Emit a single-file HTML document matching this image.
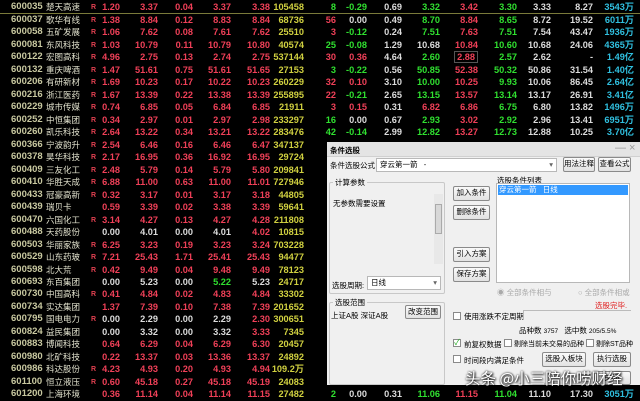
<!DOCTYPE html>
<html><head><meta charset="utf-8"><style>
*{margin:0;padding:0;box-sizing:border-box}
body{width:640px;height:401px;background:#000;overflow:hidden;position:relative;font-family:"Liberation Sans","Noto Sans CJK SC",sans-serif}
.r{position:absolute;left:0;width:640px;height:12px;font-size:9.2px;font-weight:bold;line-height:12px;white-space:nowrap}
.r span{position:absolute;text-align:right}
.r .cd{left:11px;color:#c8c8a0;text-align:left;font-size:9.5px}
.r .nm{left:46px;color:#e0e0cc;font-size:8.5px;font-weight:normal;text-align:left}
.r .R{left:91px;color:#e04050;font-size:7px;top:1px}
.c4{right:520px}.c5{right:482px}.c6{right:447px}.c7{right:409px}.c8{right:370px}.c9{right:336px;color:#d0d040}
.c10{right:304px}.c11{right:273px}.c12{right:238px}.c13{right:200px}.c14{right:162px}.c15{right:123px}.c16{right:89px}.c17{right:47px}.c18{right:6px;color:#30c0e0}
.e{color:#f04058}.g{color:#30e030}.w{color:#dcdcdc}
.dlg{position:absolute;left:327px;top:142px;width:313px;height:243px;background:#f0f0f0;font-size:7.5px;color:#000;font-family:"Liberation Sans","Noto Sans CJK SC",sans-serif}
.dlg div{position:absolute;white-space:nowrap}
.btn{border:1px solid #8a8a8a;background:linear-gradient(#fafafa,#e2e2e2);text-align:center;line-height:12px;border-radius:2px}
.box{border:1px solid #b8b8b8;background:#fff}
.grp{border:1px solid #c8c8c8;border-radius:2px}
.cb{width:8px;height:8px;border:1px solid #8a8a8a;background:#fff}
</style></head><body>
<div style="position:absolute;left:0;top:13px;width:640px;height:1px;background:#7a7a3a"></div>

<div class="r" style="top:1px"><span class="cd">600035</span><span class="nm">楚天高速</span><span class="R">R</span><span class="c4 e">1.20</span><span class="c5 e">3.37</span><span class="c6 e">0.04</span><span class="c7 e">3.37</span><span class="c8 e">3.38</span><span class="c9">105458</span><span class="c10 g">8</span><span class="c11 g">-0.29</span><span class="c12 w">0.69</span><span class="c13 g">3.32</span><span class="c14 e">3.42</span><span class="c15 g">3.30</span><span class="c16 w">3.33</span><span class="c17 w">8.27</span><span class="c18">3543万</span></div>
<div class="r" style="top:14px"><span class="cd">600037</span><span class="nm">歌华有线</span><span class="R">R</span><span class="c4 e">1.38</span><span class="c5 e">8.84</span><span class="c6 e">0.12</span><span class="c7 e">8.83</span><span class="c8 e">8.84</span><span class="c9">68736</span><span class="c10 e">56</span><span class="c11 w">0.00</span><span class="c12 w">0.49</span><span class="c13 g">8.70</span><span class="c14 e">8.84</span><span class="c15 g">8.65</span><span class="c16 w">8.72</span><span class="c17 w">19.52</span><span class="c18">6011万</span></div>
<div class="r" style="top:26px"><span class="cd">600058</span><span class="nm">五矿发展</span><span class="R">R</span><span class="c4 e">1.06</span><span class="c5 e">7.62</span><span class="c6 e">0.08</span><span class="c7 e">7.61</span><span class="c8 e">7.62</span><span class="c9">25510</span><span class="c10 e">3</span><span class="c11 g">-0.12</span><span class="c12 w">0.24</span><span class="c13 g">7.51</span><span class="c14 e">7.63</span><span class="c15 g">7.51</span><span class="c16 w">7.54</span><span class="c17 w">43.47</span><span class="c18">1936万</span></div>
<div class="r" style="top:39px"><span class="cd">600081</span><span class="nm">东风科技</span><span class="R">R</span><span class="c4 e">1.03</span><span class="c5 e">10.79</span><span class="c6 e">0.11</span><span class="c7 e">10.79</span><span class="c8 e">10.80</span><span class="c9">40574</span><span class="c10 g">25</span><span class="c11 g">-0.08</span><span class="c12 w">1.29</span><span class="c13 w">10.68</span><span class="c14 e">10.84</span><span class="c15 g">10.60</span><span class="c16 w">10.68</span><span class="c17 w">24.06</span><span class="c18">4365万</span></div>
<div class="r" style="top:51px"><span class="cd">600122</span><span class="nm">宏图高科</span><span class="R">R</span><span class="c4 e">4.96</span><span class="c5 e">2.75</span><span class="c6 e">0.13</span><span class="c7 e">2.74</span><span class="c8 e">2.75</span><span class="c9">537144</span><span class="c10 e">30</span><span class="c11 e">0.36</span><span class="c12 w">4.64</span><span class="c13 g">2.60</span><span class="c14 e" style="border:1px solid #555;padding:0 2px;line-height:10px">2.88</span><span class="c15 g">2.57</span><span class="c16 w">2.62</span><span class="c17 w">-</span><span class="c18">1.49亿</span></div>
<div class="r" style="top:64px"><span class="cd">600132</span><span class="nm">重庆啤酒</span><span class="R">R</span><span class="c4 e">1.47</span><span class="c5 e">51.61</span><span class="c6 e">0.75</span><span class="c7 e">51.61</span><span class="c8 e">51.65</span><span class="c9">27153</span><span class="c10 g">3</span><span class="c11 g">-0.22</span><span class="c12 w">0.56</span><span class="c13 g">50.85</span><span class="c14 e">52.38</span><span class="c15 g">50.32</span><span class="c16 w">50.86</span><span class="c17 w">31.54</span><span class="c18">1.40亿</span></div>
<div class="r" style="top:76px"><span class="cd">600206</span><span class="nm">有研新材</span><span class="R">R</span><span class="c4 e">1.69</span><span class="c5 e">10.23</span><span class="c6 e">0.17</span><span class="c7 e">10.22</span><span class="c8 e">10.23</span><span class="c9">260229</span><span class="c10 e">32</span><span class="c11 e">0.10</span><span class="c12 w">3.10</span><span class="c13 g">10.00</span><span class="c14 e">10.25</span><span class="c15 g">9.93</span><span class="c16 w">10.06</span><span class="c17 w">86.45</span><span class="c18">2.64亿</span></div>
<div class="r" style="top:89px"><span class="cd">600216</span><span class="nm">浙江医药</span><span class="R">R</span><span class="c4 e">1.67</span><span class="c5 e">13.39</span><span class="c6 e">0.22</span><span class="c7 e">13.38</span><span class="c8 e">13.39</span><span class="c9">255895</span><span class="c10 e">22</span><span class="c11 g">-0.21</span><span class="c12 w">2.65</span><span class="c13 g">13.15</span><span class="c14 e">13.57</span><span class="c15 g">13.14</span><span class="c16 w">13.17</span><span class="c17 w">26.91</span><span class="c18">3.41亿</span></div>
<div class="r" style="top:101px"><span class="cd">600229</span><span class="nm">城市传媒</span><span class="R">R</span><span class="c4 e">0.74</span><span class="c5 e">6.85</span><span class="c6 e">0.05</span><span class="c7 e">6.84</span><span class="c8 e">6.85</span><span class="c9">21911</span><span class="c10 e">3</span><span class="c11 e">0.15</span><span class="c12 w">0.31</span><span class="c13 e">6.82</span><span class="c14 e">6.86</span><span class="c15 g">6.75</span><span class="c16 w">6.80</span><span class="c17 w">13.82</span><span class="c18">1496万</span></div>
<div class="r" style="top:114px"><span class="cd">600252</span><span class="nm">中恒集团</span><span class="R">R</span><span class="c4 e">0.34</span><span class="c5 e">2.97</span><span class="c6 e">0.01</span><span class="c7 e">2.97</span><span class="c8 e">2.98</span><span class="c9">233297</span><span class="c10 g">16</span><span class="c11 w">0.00</span><span class="c12 w">0.67</span><span class="c13 g">2.93</span><span class="c14 e">3.02</span><span class="c15 g">2.92</span><span class="c16 w">2.96</span><span class="c17 w">13.41</span><span class="c18">6951万</span></div>
<div class="r" style="top:126px"><span class="cd">600260</span><span class="nm">凯乐科技</span><span class="R">R</span><span class="c4 e">2.64</span><span class="c5 e">13.22</span><span class="c6 e">0.34</span><span class="c7 e">13.21</span><span class="c8 e">13.22</span><span class="c9">283476</span><span class="c10 g">42</span><span class="c11 g">-0.14</span><span class="c12 w">2.99</span><span class="c13 g">12.82</span><span class="c14 e">13.27</span><span class="c15 g">12.73</span><span class="c16 w">12.88</span><span class="c17 w">10.25</span><span class="c18">3.70亿</span></div>
<div class="r" style="top:139px"><span class="cd">600366</span><span class="nm">宁波韵升</span><span class="R">R</span><span class="c4 e">2.54</span><span class="c5 e">6.46</span><span class="c6 e">0.16</span><span class="c7 e">6.46</span><span class="c8 e">6.47</span><span class="c9">347137</span></div>
<div class="r" style="top:151px"><span class="cd">600378</span><span class="nm">昊华科技</span><span class="R">R</span><span class="c4 e">2.17</span><span class="c5 e">16.95</span><span class="c6 e">0.36</span><span class="c7 e">16.92</span><span class="c8 e">16.95</span><span class="c9">29724</span></div>
<div class="r" style="top:164px"><span class="cd">600409</span><span class="nm">三友化工</span><span class="R">R</span><span class="c4 e">2.48</span><span class="c5 e">5.79</span><span class="c6 e">0.14</span><span class="c7 e">5.79</span><span class="c8 e">5.80</span><span class="c9">209841</span></div>
<div class="r" style="top:176px"><span class="cd">600410</span><span class="nm">华胜天成</span><span class="R">R</span><span class="c4 e">6.88</span><span class="c5 e">11.00</span><span class="c6 e">0.63</span><span class="c7 e">11.00</span><span class="c8 e">11.01</span><span class="c9">727946</span></div>
<div class="r" style="top:189px"><span class="cd">600433</span><span class="nm">冠豪高新</span><span class="R">R</span><span class="c4 e">0.32</span><span class="c5 e">3.17</span><span class="c6 e">0.01</span><span class="c7 e">3.17</span><span class="c8 e">3.18</span><span class="c9">44805</span></div>
<div class="r" style="top:201px"><span class="cd">600439</span><span class="nm">瑞贝卡</span><span class="c4 e">0.59</span><span class="c5 e">3.39</span><span class="c6 e">0.02</span><span class="c7 e">3.38</span><span class="c8 e">3.39</span><span class="c9">59641</span></div>
<div class="r" style="top:214px"><span class="cd">600470</span><span class="nm">六国化工</span><span class="R">R</span><span class="c4 e">3.14</span><span class="c5 e">4.27</span><span class="c6 e">0.13</span><span class="c7 e">4.27</span><span class="c8 e">4.28</span><span class="c9">211808</span></div>
<div class="r" style="top:226px"><span class="cd">600488</span><span class="nm">天药股份</span><span class="c4 w">0.00</span><span class="c5 w">4.01</span><span class="c6 w">0.00</span><span class="c7 w">4.01</span><span class="c8 e">4.02</span><span class="c9">10815</span></div>
<div class="r" style="top:239px"><span class="cd">600503</span><span class="nm">华丽家族</span><span class="R">R</span><span class="c4 e">6.25</span><span class="c5 e">3.23</span><span class="c6 e">0.19</span><span class="c7 e">3.23</span><span class="c8 e">3.24</span><span class="c9">703228</span></div>
<div class="r" style="top:251px"><span class="cd">600529</span><span class="nm">山东药玻</span><span class="R">R</span><span class="c4 e">7.21</span><span class="c5 e">25.43</span><span class="c6 e">1.71</span><span class="c7 e">25.41</span><span class="c8 e">25.43</span><span class="c9">94477</span></div>
<div class="r" style="top:264px"><span class="cd">600598</span><span class="nm">北大荒</span><span class="R">R</span><span class="c4 e">0.42</span><span class="c5 e">9.49</span><span class="c6 e">0.04</span><span class="c7 e">9.48</span><span class="c8 e">9.49</span><span class="c9">78123</span></div>
<div class="r" style="top:276px"><span class="cd">600693</span><span class="nm">东百集团</span><span class="c4 w">0.00</span><span class="c5 w">5.23</span><span class="c6 w">0.00</span><span class="c7 g">5.22</span><span class="c8 w">5.23</span><span class="c9">24717</span></div>
<div class="r" style="top:288px"><span class="cd">600730</span><span class="nm">中国高科</span><span class="R">R</span><span class="c4 e">0.41</span><span class="c5 e">4.84</span><span class="c6 e">0.02</span><span class="c7 e">4.83</span><span class="c8 e">4.84</span><span class="c9">33302</span></div>
<div class="r" style="top:301px"><span class="cd">600734</span><span class="nm">实达集团</span><span class="c4 e">1.37</span><span class="c5 e">7.39</span><span class="c6 e">0.10</span><span class="c7 e">7.38</span><span class="c8 e">7.39</span><span class="c9">201652</span></div>
<div class="r" style="top:313px"><span class="cd">600795</span><span class="nm">国电电力</span><span class="R">R</span><span class="c4 w">0.00</span><span class="c5 w">2.29</span><span class="c6 w">0.00</span><span class="c7 w">2.29</span><span class="c8 e">2.30</span><span class="c9">300651</span></div>
<div class="r" style="top:326px"><span class="cd">600824</span><span class="nm">益民集团</span><span class="c4 w">0.00</span><span class="c5 w">3.32</span><span class="c6 w">0.00</span><span class="c7 w">3.32</span><span class="c8 e">3.33</span><span class="c9">7345</span></div>
<div class="r" style="top:338px"><span class="cd">600883</span><span class="nm">博闻科技</span><span class="c4 e">0.64</span><span class="c5 e">6.29</span><span class="c6 e">0.04</span><span class="c7 e">6.29</span><span class="c8 e">6.30</span><span class="c9">20457</span></div>
<div class="r" style="top:351px"><span class="cd">600980</span><span class="nm">北矿科技</span><span class="c4 e">0.22</span><span class="c5 e">13.37</span><span class="c6 e">0.03</span><span class="c7 e">13.36</span><span class="c8 e">13.37</span><span class="c9">24892</span></div>
<div class="r" style="top:363px"><span class="cd">600986</span><span class="nm">科达股份</span><span class="R">R</span><span class="c4 e">4.23</span><span class="c5 e">4.93</span><span class="c6 e">0.20</span><span class="c7 e">4.93</span><span class="c8 e">4.94</span><span class="c9">109.2万</span></div>
<div class="r" style="top:376px"><span class="cd">601100</span><span class="nm">恒立液压</span><span class="R">R</span><span class="c4 e">0.60</span><span class="c5 e">45.18</span><span class="c6 e">0.27</span><span class="c7 e">45.18</span><span class="c8 e">45.19</span><span class="c9">24083</span></div>
<div class="r" style="top:388px"><span class="cd">601200</span><span class="nm">上海环境</span><span class="c4 e">0.36</span><span class="c5 e">11.14</span><span class="c6 e">0.04</span><span class="c7 e">11.14</span><span class="c8 e">11.15</span><span class="c9">27482</span><span class="c10 g">2</span><span class="c11 w">0.00</span><span class="c12 w">0.31</span><span class="c13 g">11.06</span><span class="c14 e">11.15</span><span class="c15 g">11.04</span><span class="c16 w">11.10</span><span class="c17 w">17.30</span><span class="c18">3051万</span></div>

<div class="dlg">
  <div style="left:0;top:0;width:313px;height:15px;background:#e4e4e4;border-bottom:1px solid #d0d0d0"></div>
  <div style="left:3px;top:3px;font-weight:bold">条件选股</div>
  <div style="left:288px;top:0;color:#999;font-size:11px">— ×</div>
  <div style="left:3px;top:18px">条件选股公式</div>
  <div class="box" style="left:49px;top:16px;width:181px;height:14px;padding-left:3px;line-height:12px">穿云第一箭 &nbsp; -<span style="position:absolute;right:3px;color:#666">▾</span></div>
  <div class="btn" style="left:236px;top:15px;width:32px;height:15px">用法注释</div>
  <div class="btn" style="left:271px;top:15px;width:33px;height:15px">查看公式</div>
  <div class="grp" style="left:2px;top:40px;width:116px;height:112px"></div>
  <div style="left:6px;top:35px;background:#f0f0f0;padding:0 2px">计算参数</div>
  <div style="left:6px;top:56px">无参数需要设置</div>
  <div style="left:107px;top:52px;width:9px;height:70px;background:#e8e8e8"></div>
  <div style="left:108px;top:62px;width:7px;height:30px;background:#d8d8d8;border:1px solid #aaa"></div>
  <div style="left:5px;top:138px">选股周期:</div>
  <div class="box" style="left:40px;top:134px;width:74px;height:14px;padding-left:3px;line-height:12px">日线<span style="position:absolute;right:3px;color:#666">▾</span></div>
  <div class="btn" style="left:126px;top:44px;width:37px;height:15px">加入条件</div>
  <div class="btn" style="left:126px;top:63px;width:37px;height:15px">删除条件</div>
  <div class="btn" style="left:126px;top:105px;width:37px;height:15px">引入方案</div>
  <div class="btn" style="left:126px;top:125px;width:37px;height:15px">保存方案</div>
  <div style="left:170px;top:33px">选股条件列表</div>
  <div class="box" style="left:169px;top:41px;width:134px;height:100px"></div>
  <div style="left:171px;top:43px;width:130px;height:10px;background:#3399ff;color:#fff;line-height:10px;padding-left:1px">穿云第一箭 &nbsp; 日线</div>
  <div style="left:170px;top:145px;color:#aaa">◉ 全部条件相与</div>
  <div style="left:251px;top:145px;color:#aaa">○ 全部条件相或</div>
  <div style="left:268px;top:158px;color:#e02020">选股完毕.</div>
  <div class="grp" style="left:2px;top:160px;width:116px;height:83px"></div>
  <div style="left:6px;top:155px;background:#f0f0f0;padding:0 2px">选股范围</div>
  <div style="left:4px;top:168px">上证A股 深证A股</div>
  <div class="btn" style="left:78px;top:163px;width:36px;height:14px">改变范围</div>
  <div class="cb" style="left:126px;top:170px"></div>
  <div style="left:137px;top:169px">使用涨跌不定周期</div>
  <div style="left:196px;top:168px;width:108px;height:10px;border-top:1px solid #bbb;border-left:1px solid #bbb"></div>
  <div style="left:192px;top:183px">品种数 <span style="font-size:6.5px">3757</span> &nbsp; 选中数 <span style="font-size:6.5px">205/5.5%</span></div>
  <div class="cb" style="left:126px;top:197px;font-size:8px;line-height:6px;color:#2a2;text-align:center">✓</div>
  <div style="left:137px;top:197px">前复权数据</div>
  <div class="cb" style="left:177px;top:197px"></div>
  <div style="left:187px;top:197px;font-size:7px">剔除当前未交易的品种</div>
  <div class="cb" style="left:259px;top:197px"></div>
  <div style="left:269px;top:197px;font-size:7px">剔除ST品种</div>
  <div class="cb" style="left:126px;top:213px"></div>
  <div style="left:137px;top:213px">时间段内满足条件</div>
  <div class="btn" style="left:215px;top:210px;width:44px;height:15px">选股入板块</div>
  <div class="btn" style="left:266px;top:210px;width:38px;height:15px">执行选股</div>
  <div class="btn" style="left:266px;top:229px;width:38px;height:14px">关闭</div>
</div>
<div style="position:absolute;left:465px;top:368px;font-size:15.5px;color:#fff;font-family:'Noto Sans CJK SC',sans-serif;text-shadow:0 0 2px #000,1px 1px 2px #000;white-space:nowrap;line-height:20px">头条 @小三陪你唠财经</div>
</body></html>
